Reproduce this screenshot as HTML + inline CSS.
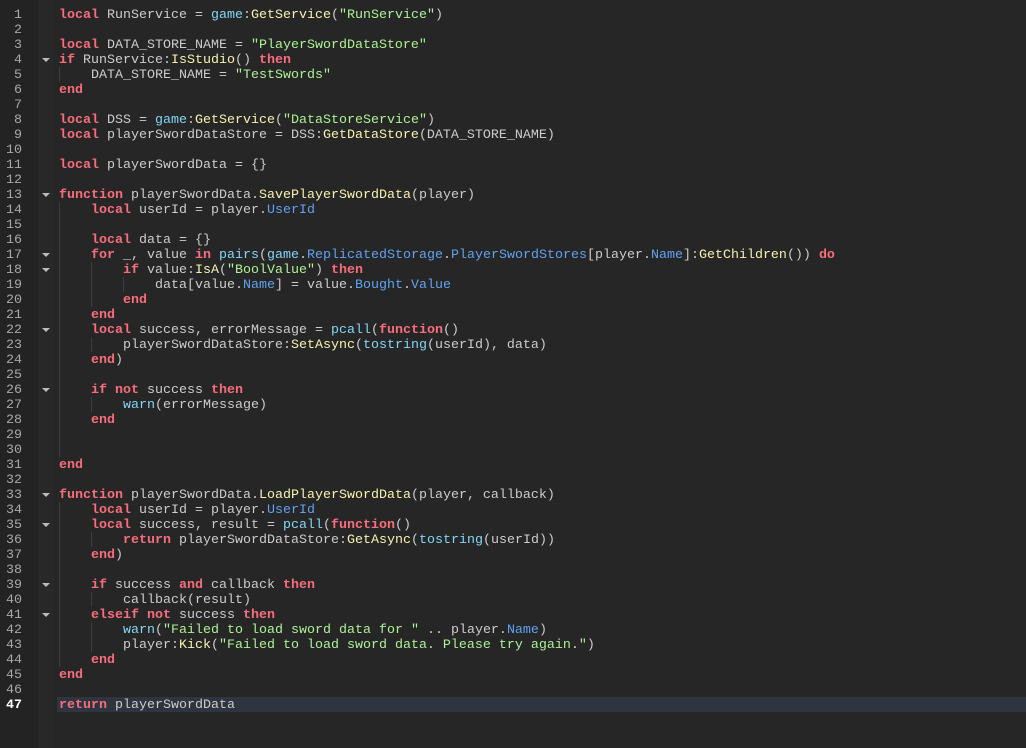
<!DOCTYPE html>
<html><head><meta charset="utf-8"><style>
html,body{margin:0;padding:0;width:1026px;height:748px;overflow:hidden;background:#262626}
.g{position:absolute;left:0;top:0;width:38px;height:748px;background:#232323}
.f{position:absolute;left:38px;top:0;width:16px;height:748px;background:#282828}
.c{position:absolute;left:54px;top:0;right:0;height:748px;background:#262626}
.hl{position:absolute;left:57px;right:0;top:697px;height:15px;background:#2e3440}
.ln{position:absolute;left:0;width:22px;text-align:right;font:13.33px/15px "Liberation Mono",monospace;color:#a8a8a8;margin-top:1px}
.code{position:absolute;left:59px;top:7.5px;font:13.33px/15px "Liberation Mono",monospace;color:#cccccc;white-space:pre}
.code div{height:15px}
.k{color:#f86d7c;font-weight:bold}
.b{color:#84d6f7}
.m{color:#f5f3b0}
.p{color:#61a1f1}
.s{color:#adf195}
.ar{position:absolute;left:42px;width:0;height:0;border-left:4px solid transparent;border-right:4px solid transparent;border-top:4px solid #bbb;margin-top:1px}
.ig{position:absolute;width:1px;background:#3c3c3c;margin-top:1px}
</style></head><body>
<div class="g"></div><div class="f"></div><div class="c"></div>
<div class="hl"></div>
<div class="ln" style="top:6.5px">1</div><div class="ln" style="top:21.5px">2</div><div class="ln" style="top:36.5px">3</div><div class="ln" style="top:51.5px">4</div><div class="ln" style="top:66.5px">5</div><div class="ln" style="top:81.5px">6</div><div class="ln" style="top:96.5px">7</div><div class="ln" style="top:111.5px">8</div><div class="ln" style="top:126.5px">9</div><div class="ln" style="top:141.5px">10</div><div class="ln" style="top:156.5px">11</div><div class="ln" style="top:171.5px">12</div><div class="ln" style="top:186.5px">13</div><div class="ln" style="top:201.5px">14</div><div class="ln" style="top:216.5px">15</div><div class="ln" style="top:231.5px">16</div><div class="ln" style="top:246.5px">17</div><div class="ln" style="top:261.5px">18</div><div class="ln" style="top:276.5px">19</div><div class="ln" style="top:291.5px">20</div><div class="ln" style="top:306.5px">21</div><div class="ln" style="top:321.5px">22</div><div class="ln" style="top:336.5px">23</div><div class="ln" style="top:351.5px">24</div><div class="ln" style="top:366.5px">25</div><div class="ln" style="top:381.5px">26</div><div class="ln" style="top:396.5px">27</div><div class="ln" style="top:411.5px">28</div><div class="ln" style="top:426.5px">29</div><div class="ln" style="top:441.5px">30</div><div class="ln" style="top:456.5px">31</div><div class="ln" style="top:471.5px">32</div><div class="ln" style="top:486.5px">33</div><div class="ln" style="top:501.5px">34</div><div class="ln" style="top:516.5px">35</div><div class="ln" style="top:531.5px">36</div><div class="ln" style="top:546.5px">37</div><div class="ln" style="top:561.5px">38</div><div class="ln" style="top:576.5px">39</div><div class="ln" style="top:591.5px">40</div><div class="ln" style="top:606.5px">41</div><div class="ln" style="top:621.5px">42</div><div class="ln" style="top:636.5px">43</div><div class="ln" style="top:651.5px">44</div><div class="ln" style="top:666.5px">45</div><div class="ln" style="top:681.5px">46</div><div class="ln" style="top:696.5px;color:#fff;font-weight:bold">47</div>

<div class="ar" style="top:57px"></div><div class="ar" style="top:192px"></div><div class="ar" style="top:252px"></div><div class="ar" style="top:267px"></div><div class="ar" style="top:327px"></div><div class="ar" style="top:387px"></div><div class="ar" style="top:492px"></div><div class="ar" style="top:522px"></div><div class="ar" style="top:582px"></div><div class="ar" style="top:612px"></div>

<div class="ig" style="left:59px;top:66px;height:15px"></div>
<div class="ig" style="left:59px;top:201px;height:255px"></div>
<div class="ig" style="left:91px;top:261px;height:45px"></div>
<div class="ig" style="left:123px;top:276px;height:15px"></div>
<div class="ig" style="left:91px;top:336px;height:15px"></div>
<div class="ig" style="left:91px;top:396px;height:15px"></div>
<div class="ig" style="left:59px;top:501px;height:165px"></div>
<div class="ig" style="left:91px;top:531px;height:15px"></div>
<div class="ig" style="left:91px;top:591px;height:15px"></div>
<div class="ig" style="left:91px;top:621px;height:30px"></div>

<div class="code"><div><span class="k">local</span> RunService = <span class="b">game</span>:<span class="m">GetService</span>(<span class="s">"RunService"</span>)</div><div> </div><div><span class="k">local</span> DATA_STORE_NAME = <span class="s">"PlayerSwordDataStore"</span></div><div><span class="k">if</span> RunService:<span class="m">IsStudio</span>() <span class="k">then</span></div><div>    DATA_STORE_NAME = <span class="s">"TestSwords"</span></div><div><span class="k">end</span></div><div> </div><div><span class="k">local</span> DSS = <span class="b">game</span>:<span class="m">GetService</span>(<span class="s">"DataStoreService"</span>)</div><div><span class="k">local</span> playerSwordDataStore = DSS:<span class="m">GetDataStore</span>(DATA_STORE_NAME)</div><div> </div><div><span class="k">local</span> playerSwordData = {}</div><div> </div><div><span class="k">function</span> playerSwordData.<span class="m">SavePlayerSwordData</span>(player)</div><div>    <span class="k">local</span> userId = player.<span class="p">UserId</span></div><div> </div><div>    <span class="k">local</span> data = {}</div><div>    <span class="k">for</span> _, value <span class="k">in</span> <span class="b">pairs</span>(<span class="b">game</span>.<span class="p">ReplicatedStorage</span>.<span class="p">PlayerSwordStores</span>[player.<span class="p">Name</span>]:<span class="m">GetChildren</span>()) <span class="k">do</span></div><div>        <span class="k">if</span> value:<span class="m">IsA</span>(<span class="s">"BoolValue"</span>) <span class="k">then</span></div><div>            data[value.<span class="p">Name</span>] = value.<span class="p">Bought</span>.<span class="p">Value</span></div><div>        <span class="k">end</span></div><div>    <span class="k">end</span></div><div>    <span class="k">local</span> success, errorMessage = <span class="b">pcall</span>(<span class="k">function</span>()</div><div>        playerSwordDataStore:<span class="m">SetAsync</span>(<span class="b">tostring</span>(userId), data)</div><div>    <span class="k">end</span>)</div><div> </div><div>    <span class="k">if</span> <span class="k">not</span> success <span class="k">then</span></div><div>        <span class="b">warn</span>(errorMessage)</div><div>    <span class="k">end</span></div><div> </div><div> </div><div><span class="k">end</span></div><div> </div><div><span class="k">function</span> playerSwordData.<span class="m">LoadPlayerSwordData</span>(player, callback)</div><div>    <span class="k">local</span> userId = player.<span class="p">UserId</span></div><div>    <span class="k">local</span> success, result = <span class="b">pcall</span>(<span class="k">function</span>()</div><div>        <span class="k">return</span> playerSwordDataStore:<span class="m">GetAsync</span>(<span class="b">tostring</span>(userId))</div><div>    <span class="k">end</span>)</div><div> </div><div>    <span class="k">if</span> success <span class="k">and</span> callback <span class="k">then</span></div><div>        callback(result)</div><div>    <span class="k">elseif</span> <span class="k">not</span> success <span class="k">then</span></div><div>        <span class="b">warn</span>(<span class="s">"Failed to load sword data for "</span> .. player.<span class="p">Name</span>)</div><div>        player:<span class="m">Kick</span>(<span class="s">"Failed to load sword data. Please try again."</span>)</div><div>    <span class="k">end</span></div><div><span class="k">end</span></div><div> </div><div><span class="k">return</span> playerSwordData</div></div>
</body></html>
